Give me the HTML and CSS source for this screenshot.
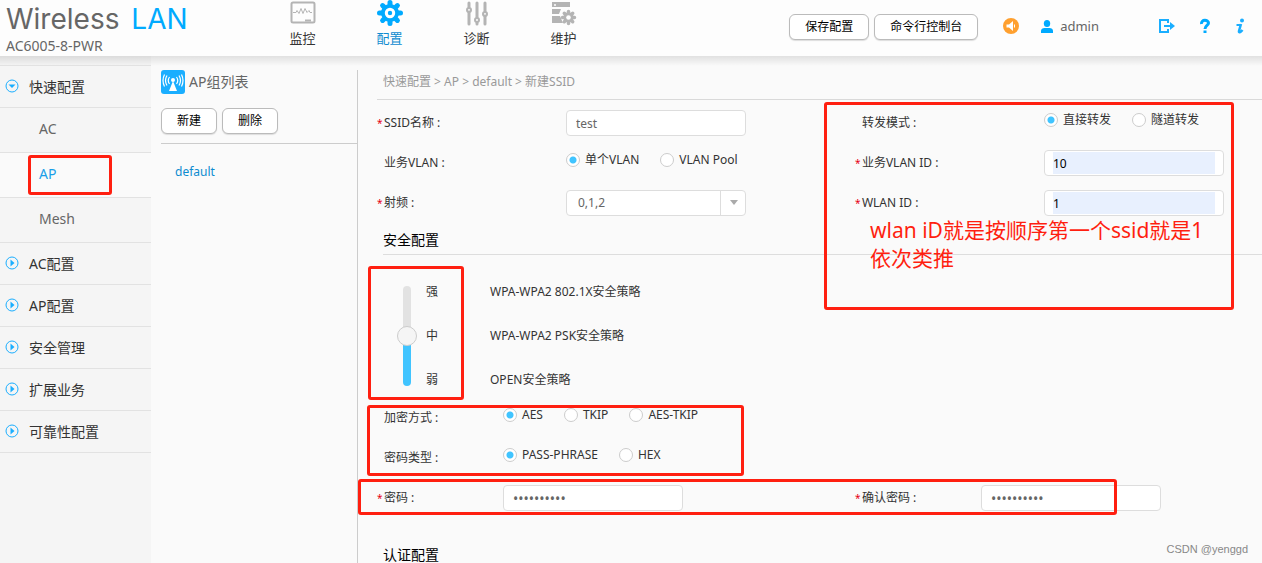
FILE: index.html
```html
<!DOCTYPE html>
<html lang="zh-CN">
<head>
    <meta charset="UTF-8">
    <meta name="viewport" content="width=device-width, initial-scale=1.0">
    <title>Wireless LAN</title>
    <link rel="stylesheet" href="styles.css">
</head>
<body>
    <header class="header">
        <div class="brand">
            <h1>Wireless <span>LAN</span></h1>
            <p>AC6005-8-PWR</p>
        </div>
        <nav class="topnav">
            <a href="#monitor">
                <svg width="26" height="26" viewBox="0 0 26 26" fill="none" stroke="#b4b4b4">
                    <rect x="1.5" y="2.5" width="23" height="20" rx="1.5" stroke-width="2"/>
                    <path d="M3 12.5h3l1-2 2 3 2-5 2 5 2-5 2 4 2-2 1 2h2" stroke-width="1"/>
                    <path d="M15 20.5h6" stroke-width="2"/>
                </svg>
                监控
            </a>
            <a href="#config" class="active">
                <svg width="26" height="26" viewBox="0 0 26 26">
                    <g stroke="#0af" stroke-width="5" stroke-linecap="round">
                        <path d="M13 2.5v21M2.500 13h21M5.600 5.600l14.800 14.800M20.400 5.600L5.600 20.400"/>
                    </g>
                    <circle cx="13" cy="13" r="9" fill="#0af"/>
                    <circle cx="13" cy="13" r="3.700" fill="#0af" stroke="#fff" stroke-width="3"/>
                </svg>
                配置
            </a>
            <a href="#diagnose">
                <svg width="26" height="26" viewBox="0 0 26 26" fill="none" stroke="#b4b4b4">
                    <path d="M5 3v4M5 12v12M13 3v14M13 23v1M21 3v8M21 16v8" stroke-width="3" stroke-linecap="round"/>
                    <circle cx="5" cy="10" r="2" stroke-width="2"/>
                    <circle cx="13" cy="20" r="2" stroke-width="2"/>
                    <circle cx="21" cy="14" r="2" stroke-width="2"/>
                </svg>
                诊断
            </a>
            <a href="#maintain">
                <svg width="26" height="26" viewBox="0 0 26 26">
                    <path d="M1 2h18v5H1zM1 9h9l-2 5H1zM1 16h8l3 7H1z" fill="#b4b4b4"/>
                    <circle cx="4" cy="5" r="1" fill="#fff"/>
                    <g stroke="#b4b4b4" stroke-width="3.500" stroke-linecap="round">
                        <path d="M17.500 11.500v12M11.500 17.500h12M13.300 13.300l8.400 8.400M21.700 13.300l-8.400 8.400"/>
                    </g>
                    <circle cx="17.500" cy="17.500" r="5" fill="#b4b4b4"/>
                    <circle cx="17.500" cy="17.500" r="2.300" fill="#fff"/>
                </svg>
                维护
            </a>
        </nav>
        <div class="tools">
            <div class="tool-buttons">
                <button type="button" class="btn">保存配置</button>
                <button type="button" class="btn">命令行控制台</button>
            </div>
            <svg class="speaker" width="16" height="16" viewBox="0 0 16 16">
                <circle cx="8" cy="8" r="8" fill="#ffa02f"/>
                <path d="M3.500 6.500h2.500l4-3.500v10l-4-3.500H3.500z" fill="#fff"/>
                <path d="M11.500 6.500v3" stroke="#fff"/>
            </svg>
            <span class="user">
                <svg width="12" height="13" viewBox="0 0 12 13" fill="#0af">
                    <ellipse cx="6" cy="3.500" rx="3.200" ry="3.500"/>
                    <path d="M0 13v-2c0-2 1.500-3 3.500-3h5C10.500 8 12 9 12 11v2z"/>
                </svg>
                admin
            </span>
            <div class="links">
                <a href="#logout" aria-label="退出">
                    <svg width="18" height="16" viewBox="0 0 18 16" fill="none" stroke="#1aaeff" stroke-width="2">
                        <path d="M10 5V2H2v12h8v-3M6 8h8"/>
                        <path d="M12 4l5 4-5 4z" fill="#1aaeff" stroke="none"/>
                    </svg>
                </a>
                <a href="#help" aria-label="帮助">
                    <svg width="12" height="16" viewBox="0 0 12 16" fill="none" stroke="#0af" stroke-width="3">
                        <path d="M2.500 6C2 1 9.500 1.500 9.500 5c0 2.500-3.500 2.500-3.500 6"/>
                        <path d="M6 12.500v2.500"/>
                    </svg>
                </a>
                <a href="#about" aria-label="关于">
                    <svg width="12" height="16" viewBox="0 0 12 16" fill="none" stroke="#1aaeff">
                        <circle cx="8" cy="2.500" r="2" fill="#1aaeff" stroke="none"/>
                        <path d="M2.500 7h4" stroke-width="2"/>
                        <path d="M7 6L5 13c-.5 2 1.500 1.500 3.500-1" stroke-width="2.500"/>
                    </svg>
                </a>
            </div>
        </div>
    </header>

    <div class="page">
        <nav class="sidebar">
            <a href="#quick">
                <svg width="14" height="14" viewBox="0 0 14 14"><circle cx="7" cy="7" r="6" fill="none" stroke="#1aaeff"/><path d="M3.500 5.500h7L7 9z" fill="#1aaeff"/></svg>
                快速配置
            </a>
            <a href="#ac" class="sub">AC</a>
            <a href="#ap" class="sub active">AP</a>
            <a href="#mesh" class="sub">Mesh</a>
            <a href="#ac-config">
                <svg width="14" height="14" viewBox="0 0 14 14"><circle cx="7" cy="7" r="6" fill="none" stroke="#1aaeff"/><path d="M5.500 3.500v7L9.500 7z" fill="#1aaeff"/></svg>
                AC配置
            </a>
            <a href="#ap-config">
                <svg width="14" height="14" viewBox="0 0 14 14"><circle cx="7" cy="7" r="6" fill="none" stroke="#1aaeff"/><path d="M5.500 3.500v7L9.500 7z" fill="#1aaeff"/></svg>
                AP配置
            </a>
            <a href="#security">
                <svg width="14" height="14" viewBox="0 0 14 14"><circle cx="7" cy="7" r="6" fill="none" stroke="#1aaeff"/><path d="M5.500 3.500v7L9.500 7z" fill="#1aaeff"/></svg>
                安全管理
            </a>
            <a href="#extend">
                <svg width="14" height="14" viewBox="0 0 14 14"><circle cx="7" cy="7" r="6" fill="none" stroke="#1aaeff"/><path d="M5.500 3.500v7L9.500 7z" fill="#1aaeff"/></svg>
                扩展业务
            </a>
            <a href="#reliable">
                <svg width="14" height="14" viewBox="0 0 14 14"><circle cx="7" cy="7" r="6" fill="none" stroke="#1aaeff"/><path d="M5.500 3.500v7L9.500 7z" fill="#1aaeff"/></svg>
                可靠性配置
            </a>
        </nav>

        <aside class="groups">
            <h2>
                <svg width="24" height="24" viewBox="0 0 24 24" fill="none" stroke="#fff" stroke-width="1.500">
                    <rect width="24" height="24" rx="3" fill="#1aaeff" stroke="none"/>
                    <circle cx="12" cy="10" r="2" fill="#fff" stroke="none"/>
                    <path d="M12 11l4 10H8z" fill="#fff" stroke="none"/>
                    <path d="M8.500 7q-2.500 3.500 0 7M6 5.500q-3 5 0 10M3.500 4.500q-3 6 0 12M15.500 7q2.500 3.500 0 7M18 5.500q3 5 0 10M20.500 4.500q3 6 0 12" stroke-width="1.200"/>
                </svg>
                AP组列表
            </h2>
            <div class="group-actions">
                <button type="button" class="btn">新建</button>
                <button type="button" class="btn">删除</button>
            </div>
            <a href="#default" class="group">default</a>
        </aside>

        <main class="content">
            <p class="crumbs">快速配置 &gt; AP &gt; default &gt; 新建SSID</p>

            <form>
                <div class="fields">
                    <div class="field">
                        <label for="ssid" class="required">SSID名称 :</label>
                        <input type="text" id="ssid" class="box" value="test">
                    </div>
                    <div class="field">
                        <span class="label">转发模式 :</span>
                        <div class="radios">
                            <label><input type="radio" name="forward" checked>直接转发</label>
                            <label><input type="radio" name="forward">隧道转发</label>
                        </div>
                    </div>
                    <div class="field">
                        <span class="label">业务VLAN :</span>
                        <div class="radios">
                            <label><input type="radio" name="vlan" checked>单个VLAN</label>
                            <label><input type="radio" name="vlan">VLAN Pool</label>
                        </div>
                    </div>
                    <div class="field">
                        <label for="vlan-id" class="required">业务VLAN ID :</label>
                        <div class="box filled"><input type="text" id="vlan-id" value="10"></div>
                    </div>
                    <div class="field">
                        <label for="radio" class="required">射频 :</label>
                        <div class="dropdown">
                            <select id="radio" class="box">
                                <option>0,1,2</option>
                                <option>0</option>
                                <option>1</option>
                                <option>2</option>
                            </select>
                        </div>
                    </div>
                    <div class="field">
                        <label for="wlan-id" class="required">WLAN ID :</label>
                        <div class="box filled"><input type="text" id="wlan-id" value="1"></div>
                    </div>
                </div>

                <h3>安全配置</h3>
                <div class="levels">
                    <input type="range" min="0" max="2" value="1" aria-label="安全级别">
                    <dl>
                        <dt>强</dt><dd>WPA-WPA2 802.1X安全策略</dd>
                        <dt>中</dt><dd>WPA-WPA2 PSK安全策略</dd>
                        <dt>弱</dt><dd>OPEN安全策略</dd>
                    </dl>
                </div>

                <div class="fields narrow">
                    <div class="field wide">
                        <span class="label">加密方式 :</span>
                        <div class="radios">
                            <label><input type="radio" name="cipher" checked>AES</label>
                            <label><input type="radio" name="cipher">TKIP</label>
                            <label><input type="radio" name="cipher">AES-TKIP</label>
                        </div>
                    </div>
                    <div class="field wide">
                        <span class="label">密码类型 :</span>
                        <div class="radios">
                            <label><input type="radio" name="keytype" checked>PASS-PHRASE</label>
                            <label><input type="radio" name="keytype">HEX</label>
                        </div>
                    </div>
                    <div class="field">
                        <label for="password" class="required">密码 :</label>
                        <input type="password" id="password" class="box" value="abcdefghij">
                    </div>
                    <div class="field">
                        <label for="confirm" class="required">确认密码 :</label>
                        <input type="password" id="confirm" class="box" value="abcdefghij">
                    </div>
                </div>

                <h3 class="last">认证配置</h3>
            </form>
        </main>
    </div>

    <!-- red marks drawn over the page -->
    <div class="mark mark-ap"></div>
    <div class="mark mark-ids"><p>wlan iD就是按顺序第一个ssid就是1<br>依次类推</p></div>
    <div class="mark mark-level"></div>
    <div class="mark mark-cipher"></div>
    <div class="mark mark-password"></div>
    <div class="watermark">CSDN @yenggd</div>
</body>
</html>
```
FILE: styles.css
```css
* { margin: 0; padding: 0; box-sizing: border-box; }
body {
    position: relative; display: flex; flex-direction: column; min-height: 100vh;
    font-family: "Noto Sans", "Noto Sans CJK SC", sans-serif;
    font-size: 12px; line-height: 20px; color: #333; background: #fafafa;
}
a { color: inherit; text-decoration: none; }
svg { display: block; flex: none; }
input, select, button { font: inherit; }

.header { display: flex; height: 56px; background: #fdfdfd; }
.brand { width: 259px; padding: 4px 0 0 6px; color: #666; }
.brand h1 { font: 400 28px/30px Inter, sans-serif; white-space: nowrap; }
.brand h1 span { margin-left: 4px; color: #0af; }
.brand p { font-size: 14px; line-height: 24px; }
.topnav { display: flex; }
.topnav a {
    display: flex; flex-direction: column; align-items: center; gap: 2px;
    width: 87px; font-size: 13px;
}
.topnav .active { color: #0d8bd0; }
.tools { display: flex; flex: 1; align-items: center; padding: 0 16px 4px 0; }
.tool-buttons { display: flex; flex: none; gap: 5px; margin-left: auto; padding-top: 2px; }
.btn {
    height: 26px; padding: 0 15px; border: 1px solid #bbb; border-radius: 6px;
    background: #fff; color: #000; box-shadow: 0 1px 1px #ddd; cursor: pointer; white-space: nowrap;
}
.speaker { margin: 0 22px 0 25px; }
.user { display: flex; align-items: center; gap: 7px; font-size: 13px; color: #666; }
.links { display: flex; gap: 23px; margin-left: 59px; }

.page {
    display: flex; flex: 1;
    background: linear-gradient(rgba(0, 0, 0, 0.1), rgba(0, 0, 0, 0)) no-repeat 0 0 / 100% 10px;
}
.sidebar { width: 151px; flex: none; padding-top: 9px; background: rgba(0, 0, 0, 0.02); font-size: 14px; }
.sidebar a {
    display: flex; gap: 10px; height: 42px; padding: 11px 0 0 5px;
    border-top: 1px solid #e2e2e2;
}
.sidebar svg { margin-top: 2px; }
.sidebar .sub { height: 45px; padding-left: 39px; color: #666; }
.sidebar .active { background: #fafafa; color: #1a9fe8; }
.sidebar a:last-child { height: 43px; border-bottom: 1px solid #e2e2e2; }

.groups { width: 206px; flex: none; margin-top: 14px; padding-left: 10px; }
.groups h2 { display: flex; align-items: center; gap: 4px; font-size: 14px; font-weight: 400; color: #666; }
.group-actions { display: flex; gap: 5px; padding: 14px 0 9px; border-bottom: 1px solid #ccc; }
.group { display: block; padding: 18px 14px; color: #0d8bd0; }

.content { flex: 1; margin-top: 14px; padding-left: 19px; border-left: 1px solid #ccc; }
.crumbs { padding: 2px 6px 7px; border-bottom: 1px solid #d9d9d9; color: #999; }
.fields { display: grid; grid-template-columns: 54% 46%; padding-top: 3px; }
.field { display: grid; grid-template-columns: 189px 1fr; align-items: center; height: 40px; }
.field > label, .label { padding-left: 7px; white-space: nowrap; }
.field > .required { padding-left: 0; }
.required::before { content: "*"; display: inline-block; width: 7px; font-size: 10px; color: #e60012; }
.narrow { padding-top: 0; }
.narrow .field { grid-template-columns: 126px 1fr; }
.wide { grid-column: 1 / -1; }
.box {
    width: 180px; height: 26px; padding: 0 9px; border: 1px solid #ddd; border-radius: 4px;
    background: #fff; color: #666;
}
.box[type="password"] { font-size: 14px; }
.filled { padding: 1px 8px; }
.filled input { display: block; width: 162px; height: 22px; border: 0; background: #e8f0fe; color: #000; }
.dropdown { position: relative; width: 180px; }
.dropdown select { display: block; appearance: none; padding-left: 11px; }
.dropdown::before {
    content: ""; position: absolute; top: 1px; right: 25px; height: 24px;
    border-left: 1px solid #ddd;
}
.dropdown::after {
    content: ""; position: absolute; top: 10px; right: 8px; pointer-events: none;
    border: 4px solid transparent; border-top: 5px solid #aaa; border-bottom: 0;
}
.radios { display: flex; gap: 21px; padding-bottom: 6px; }
.radios label { display: flex; align-items: center; gap: 5px; white-space: nowrap; }
.radios input {
    appearance: none; width: 14px; height: 14px; border: 1px solid #ccc;
    border-radius: 50%; background: #fff;
}
.radios input:checked { background: radial-gradient(circle, #40c4ff 3px, #fff 4px); }

h3 { margin-left: 6px; padding: 7px 0 4px; border-bottom: 1px solid #ddd; font-size: 14px; font-weight: 400; color: #000; }
.last { padding: 27px 0 0; border: 0; line-height: 20px; }
.levels { display: flex; align-items: center; gap: 9px; padding: 27px 0 8px 20px; }
.levels input {
    appearance: none; writing-mode: vertical-lr; direction: rtl;
    width: 20px; height: 100px; background: none;
}
.levels input::-webkit-slider-runnable-track {
    width: 8px; border-radius: 4px;
    background: linear-gradient(#e2e2e2 50%, #40c4ff 50%);
}
.levels input::-webkit-slider-thumb {
    appearance: none; width: 20px; height: 20px; margin-left: -6px;
    border: 1px solid #ccc; border-radius: 50%; background: #f5f5f5;
}
.levels dl { display: grid; grid-template-columns: 64px 1fr; row-gap: 24px; }

.mark { position: absolute; border: 3px solid #ff1f10; border-radius: 3px; pointer-events: none; }
.mark-ap { left: 28px; top: 155px; width: 84px; height: 40px; }
.mark-ids { left: 824px; top: 102px; width: 410px; height: 208px; padding: 111px 0 0 43px; }
.mark-ids p { font-size: 21px; line-height: 28px; color: #ff1f10; white-space: nowrap; }
.mark-level { left: 368px; top: 266px; width: 96px; height: 134px; }
.mark-cipher { left: 367px; top: 405px; width: 377px; height: 71px; }
.mark-password { left: 358px; top: 479px; width: 759px; height: 36px; }
.watermark {
    position: absolute; right: 14px; bottom: 6px;
    font: 11px/20px "Liberation Sans", Arial, sans-serif; color: #888;
}
```
